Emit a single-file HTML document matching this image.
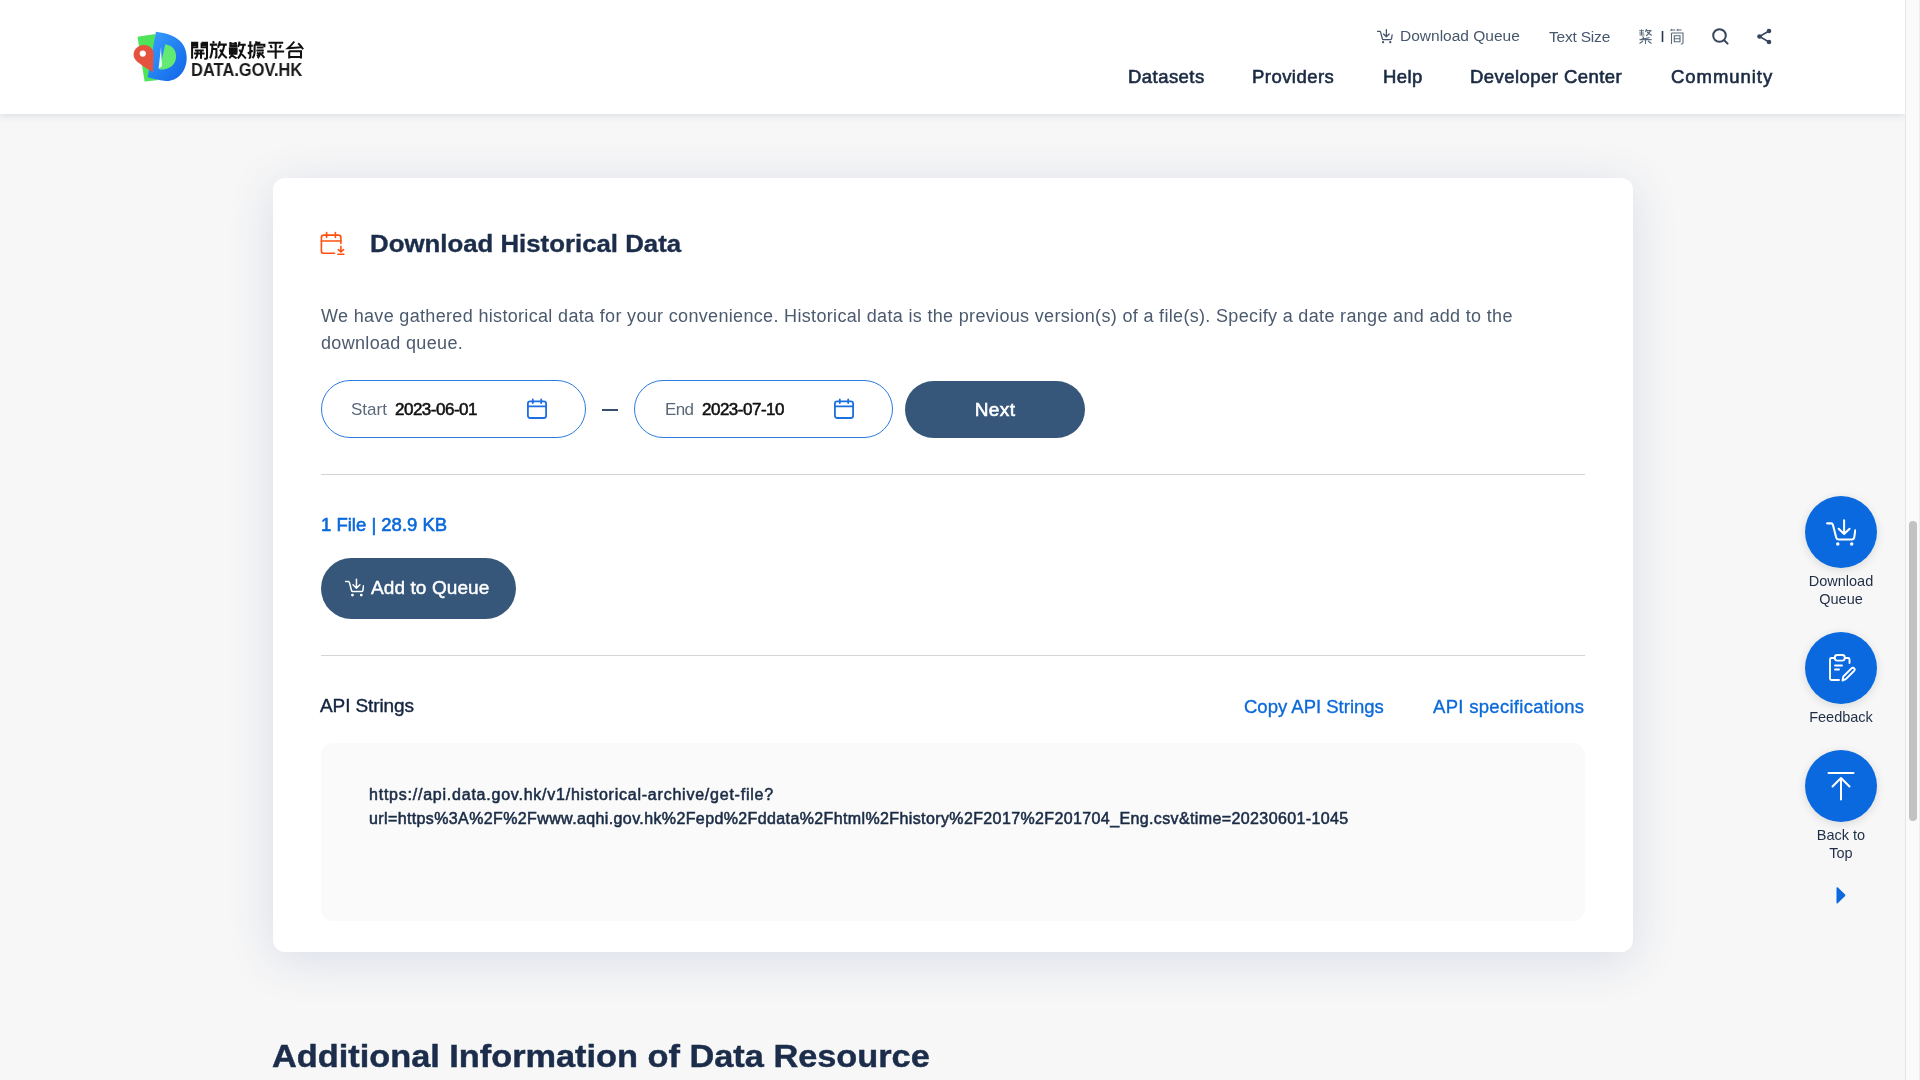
<!DOCTYPE html>
<html><head><meta charset="utf-8">
<style>
*{box-sizing:border-box}
html,body{margin:0;padding:0}
body{width:1920px;height:1080px;overflow:hidden;background:#f7f7f7;font-family:"Liberation Sans",sans-serif;position:relative}
.a{position:absolute;white-space:nowrap;will-change:transform}
#sb{position:absolute;left:1905px;top:0;width:15px;height:1080px;background:#fafafa;border-left:1px solid #e6e6e6;border-right:1px solid #ededed}
#thumb{position:absolute;left:1909px;top:521px;width:8px;height:300px;border-radius:4px;background:#c2c2c2}
#hdr{position:absolute;left:0;top:0;width:1905px;height:114px;background:#fff;box-shadow:0 1px 8px rgba(40,70,120,.16)}
.util{font-size:15.5px;color:#47576c;line-height:16px}
.nav{font-size:18.5px;font-weight:400;color:#1a2a42;line-height:19px;letter-spacing:0.45px;-webkit-text-stroke:0.6px #1a2a42}
#card{position:absolute;left:273px;top:178px;width:1360px;height:774px;background:#fff;border-radius:12px;box-shadow:0 8px 48px rgba(35,65,135,.14)}
.hr{position:absolute;left:321px;width:1264px;height:1px;background:#d4d4d4}
.pill{position:absolute;top:380px;height:58px;border:1.3px solid #2b7be0;border-radius:29px;background:#fff}
.btn{position:absolute;background:#36577a;border-radius:40px}
.fab{position:absolute;left:1805px;width:72px;height:72px;border-radius:50%;background:#0a69de;box-shadow:0 2px 10px rgba(0,0,0,.12)}
.flab{font-size:14.5px;color:#1f2e45;line-height:18px;text-align:center;width:90px;left:1796px}
</style></head>
<body>
<div id="hdr"></div>
<!-- logo -->
<svg class="a" style="left:128px;top:24px" width="64" height="64" viewBox="128 24 64 64">
 <defs>
  <linearGradient id="gB" x1="0" y1="0" x2="1" y2="1"><stop offset="0" stop-color="#3aa0ff"/><stop offset="1" stop-color="#0e63e6"/></linearGradient>
  <linearGradient id="gG" x1="0" y1="0" x2="1" y2="1"><stop offset="0" stop-color="#3fe04a"/><stop offset="1" stop-color="#6ff07a"/></linearGradient>
 </defs>
 <path d="M137.5,36.7 L155.3,34 L157,80.3 L144.6,81.5 Z" fill="#4ee45a"/>
 <path d="M155.9,31.7 C172,33.5 186.5,40 186.7,57.2 C186.8,73 176,81.5 166,80.9 C158,80.5 152,78.5 147.6,77.3 Z" fill="url(#gB)"/>
 <path d="M165.3,44.2 C172.5,45.5 176.3,50 176,57.2 C175.6,64.5 170,69.8 159.4,69.6 Z" fill="#62ea72"/>
 <path d="M161,47 L158.5,69 L162,66 Z" fill="#ffffff" opacity=".9"/>
 <path d="M144,45 C150,45 153.6,49.5 153.6,54 L152.9,72 C147,69 141.5,65 137,61.5 C134.5,59.3 133.6,57 133.6,54.5 C133.6,49 138.5,45 144,45 Z" fill="#e5533f"/>
 <circle cx="142.8" cy="53.6" r="3.1" fill="#fff"/>
</svg>
<svg class="a" style="left:190px;top:40px" width="115" height="20" viewBox="0 0 115 20" fill="none" stroke="#111" stroke-width="2.05" stroke-linecap="butt">
 <g transform="translate(1.2,1.8)">
  <path d="M0.9,0 V17 M0.9,0.9 H6 V5.4 H0.9 M1,3.1 H6 M10.4,0.9 H15.8 V15.6 Q15.8,16.9 14.2,16.9 H13 M10.4,0.9 V5.4 H15.8 M10.4,3.1 H15.8 M3.6,8.6 H12.6 M2.8,11.6 H13.4 M6.3,8.6 V12 Q6,15.2 3.8,16.8 M9.8,8.6 V17"/>
 </g>
 <g transform="translate(19.8,1.2)">
  <path d="M3.3,0 L4,2 M0,3.4 H7.4 M2.6,3.4 Q2.6,13 0.3,17 M2.6,7.7 H6.6 V14.8 Q6.6,16.4 5,16.4 M10.2,0.2 L8.2,6.5 M9.2,3.4 H17 M14.6,3.4 Q13,12.5 8.4,17.2 M10.3,8.3 Q12.5,13.8 17,17"/>
 </g>
 <g transform="translate(39,1.5)">
  <path d="M0.3,2.2 H8 M1.5,0.5 V5.5 M6.5,0.5 V5.5 M0.3,4.5 H8 M0.9,6.8 H7.6 V10.3 H0.9 Z M0.6,8.6 H8 M0,12.2 H8.4 M4.2,10.3 Q2.8,14.6 0.3,16.7 M1.8,13.5 Q5,15 7.6,17 M10.7,0.1 L9.1,5.5 M9.6,3.3 H16.8 M14.6,3.3 Q13,12.5 8.8,17 M10.4,8 Q12.5,13.5 16.9,17"/>
 </g>
 <g transform="translate(57.8,1.2)">
  <path d="M0,4.5 H5 M2.5,0 V15.6 Q2.5,17 1,16.8 M0,12.3 L5,9.4 M8.4,0 V3 M8.4,1.6 H12.6 M6.4,3.5 H16.6 V6 M6.8,3.5 V11 Q6.6,14.8 4.8,17 M9,6.3 H15.6 M8.6,9.2 H16 M9.2,11.4 L11.6,13 M9,14.6 Q12,13 12.8,11.2 M12.6,11 Q11.6,15.4 10,17 M13.4,12.6 L16.6,16.6 M15.6,11 L13.8,12.6"/>
 </g>
 <g transform="translate(77.2,1.8)">
  <path d="M1.2,0.9 H16 M3.2,3.2 L4.6,6.3 M13.7,3.2 L12.3,6.3 M0,9.7 H17 M8.5,0.9 V17"/>
 </g>
 <g transform="translate(96.3,1)">
  <path d="M8,0.5 Q5,4.5 1.7,7.2 Q9,7 14.6,6.3 M11.9,2.2 Q14.6,4.6 16.8,8.3 M2.9,10.2 V17.4 M2.9,10.3 H14.7 V17.4 M2.9,16 H14.7"/>
 </g>
</svg>
<div class="a" style="left:190.5px;top:59.5px;font-size:18.6px;line-height:19px;font-weight:700;color:#1a1a1a;transform:scaleX(0.885);transform-origin:0 0">DATA.GOV.HK</div>

<!-- util row -->
<svg class="a" style="left:1376.5px;top:29px" width="15.5" height="14.5" viewBox="0 0 28 26" fill="none" stroke="#44546a" stroke-width="2.3" stroke-linecap="round" stroke-linejoin="round">
 <path d="M1,4 H5 Q6,4 6.5,5.5 L9.6,17.5 Q10,19 11.5,19 H24.5 Q26,19 26.3,17.5 L27.3,10.5"/>
 <path d="M16.9,1 V14 M11.8,9 L16.9,14 L22,9"/>
 <circle cx="11" cy="23.8" r="0.9" fill="#44546a"/><circle cx="24" cy="23.8" r="0.9" fill="#44546a"/>
</svg>
<div class="a util" style="left:1400px;top:27.5px;">Download Queue</div>
<div class="a util" style="left:1549px;top:28.5px;letter-spacing:-0.2px">Text Size</div>
<svg class="a" style="left:1638px;top:28px" width="48" height="17" viewBox="0 0 48 17" fill="none" stroke="#5a687a" stroke-width="1.1">
 <path d="M3.5,1.5 V6.5 M1.2,2.8 H6 M1.2,5 H6 M1.5,7 H6.5 M8.5,1 L7.5,4 M8,2.6 H13.5 M12.6,2.6 Q11,6 8.2,8 M9,4 L13.8,7.5 M4.5,8.5 Q7,10 3.5,11 Q8,11 11.5,9.5 M1.5,11.6 H13.6 M7.5,11.6 V16 M5,13 L1.5,15.5 M10,13 L13.5,15.5"/>
 <path d="M24.5,3 V14" stroke="#26364d" stroke-width="1.6"/>
 <path d="M33.8,1 L32.6,3 M33.3,2 H37.2 M40,1 L38.8,3 M39.4,2 H43.5 M33.5,5 V16 M33.5,5 H45 V14.8 Q45,16 43.8,16 H42.8 M36.3,7.8 H42 V13.8 H36.3 Z M36.3,10.8 H42"/>
</svg>
<svg class="a" style="left:1711px;top:27px" width="19" height="19" viewBox="0 0 19 19" fill="none" stroke="#34455c" stroke-width="2" stroke-linecap="round">
 <circle cx="8.5" cy="8.5" r="6.3"/><path d="M13.2,13.2 L16.6,16.6"/>
</svg>
<svg class="a" style="left:1755px;top:27px" width="19" height="19" viewBox="0 0 19 19" stroke="#34455c" stroke-width="1.5">
 <path d="M14,4 L4.5,9.5 L14,15" fill="none"/>
 <circle cx="14" cy="4" r="2.3" fill="#34455c" stroke="none"/><circle cx="4.5" cy="9.5" r="2.3" fill="#34455c" stroke="none"/><circle cx="14" cy="15" r="2.3" fill="#34455c" stroke="none"/>
</svg>

<!-- nav -->
<div class="a nav" style="left:1128px;top:67px">Datasets</div>
<div class="a nav" style="left:1252px;top:67px">Providers</div>
<div class="a nav" style="left:1383px;top:67px">Help</div>
<div class="a nav" style="left:1470px;top:67px">Developer Center</div>
<div class="a nav" style="left:1671px;top:67px;letter-spacing:0.95px">Community</div>

<div id="sb"></div><div id="thumb"></div>

<!-- CARD -->
<div id="card"></div>
<svg class="a" style="left:319px;top:231px" width="27" height="25" viewBox="319 231 27 25" fill="none" stroke="#ff5010" stroke-width="1.6" stroke-linecap="round" stroke-linejoin="round">
 <path d="M334.6,253.3 H323.8 Q321.4,253.3 321.4,250.9 V237.6 Q321.4,235.1 323.8,235.1 H338.4 Q340.9,235.1 340.9,237.6 V243.4"/>
 <path d="M321.4,241 H340.9 M326.6,232.5 V237.4 M335.4,232.5 V237.4"/>
 <path d="M340.9,246.4 V251.8 M338.3,249.6 L340.9,252 L343.5,249.6 M337.9,254.2 H343.9"/>
</svg>
<div class="a" style="left:369.5px;top:231.5px;font-size:24px;line-height:24px;font-weight:700;color:#1b2d4a;transform:scaleX(1.075);transform-origin:0 0;-webkit-text-stroke:0.35px #1b2d4a">Download Historical Data</div>
<div class="a" style="left:320.5px;top:303px;font-size:18px;line-height:27px;color:#4b5a6e;letter-spacing:0.33px;white-space:normal;width:1250px">We have gathered historical data for your convenience. Historical data is the previous version(s) of a file(s). Specify a date range and add to the download queue.</div>

<div class="pill" style="left:321px;width:265px"></div>
<div class="a" style="left:351px;top:400px;font-size:17px;line-height:20px;color:#5b6879">Start</div>
<div class="a" style="left:395px;top:400px;font-size:17px;line-height:20px;color:#111;letter-spacing:-0.5px;-webkit-text-stroke:0.55px #111">2023-06-01</div>
<svg class="a" style="left:526px;top:398px" width="22" height="22" viewBox="0 0 22 22" fill="none" stroke="#1b6fe0" stroke-width="1.8" stroke-linecap="round">
 <rect x="1.9" y="3.4" width="18.2" height="16.6" rx="2.2"/><path d="M1.9,8.3 H20.1 M6.8,1.4 V5 M15.2,1.4 V5"/>
</svg>
<div class="a" style="left:602px;top:408.5px;width:16px;height:2px;background:#36506e"></div>
<div class="pill" style="left:634px;width:259px"></div>
<div class="a" style="left:665px;top:400px;font-size:17px;line-height:20px;color:#5b6879;letter-spacing:-0.6px">End</div>
<div class="a" style="left:702px;top:400px;font-size:17px;line-height:20px;color:#111;letter-spacing:-0.5px;-webkit-text-stroke:0.55px #111">2023-07-10</div>
<svg class="a" style="left:833px;top:398px" width="22" height="22" viewBox="0 0 22 22" fill="none" stroke="#1b6fe0" stroke-width="1.8" stroke-linecap="round">
 <rect x="1.9" y="3.4" width="18.2" height="16.6" rx="2.2"/><path d="M1.9,8.3 H20.1 M6.8,1.4 V5 M15.2,1.4 V5"/>
</svg>
<div class="btn" style="left:905px;top:381px;width:180px;height:57px"></div>
<div class="a" style="left:905px;top:400px;width:180px;text-align:center;font-size:19px;line-height:20px;color:#fff;letter-spacing:0.4px;-webkit-text-stroke:0.6px #fff">Next</div>

<div class="hr" style="top:474px"></div>
<div class="a" style="left:321px;top:515px;font-size:18.5px;line-height:20px;color:#0b69da;-webkit-text-stroke:0.6px #0b69da">1 File | 28.9 KB</div>
<div class="btn" style="left:321px;top:558px;width:195px;height:61px"></div>
<svg class="a" style="left:345px;top:578px" width="19" height="19" viewBox="0 0 28 26" fill="none" stroke="#fff" stroke-width="2.2" stroke-linecap="round" stroke-linejoin="round">
 <path d="M1,4 H5 Q6,4 6.5,5.5 L9.6,17.5 Q10,19 11.5,19 H24.5 Q26,19 26.3,17.5 L27.3,10.5"/>
 <path d="M16.9,1 V14 M11.8,9 L16.9,14 L22,9"/>
 <circle cx="11" cy="24.2" r="1" fill="#fff"/><circle cx="24" cy="24.2" r="1" fill="#fff"/>
</svg>
<div class="a" style="left:371px;top:578px;font-size:19px;line-height:20px;color:#fff;letter-spacing:0.1px;-webkit-text-stroke:0.45px #fff">Add to Queue</div>

<div class="hr" style="top:655px"></div>
<div class="a" style="left:320px;top:696px;font-size:19px;line-height:20px;color:#13243f;letter-spacing:-0.1px;-webkit-text-stroke:0.4px #13243f">API Strings</div>
<div class="a" style="left:1244px;top:697px;font-size:18.5px;line-height:20px;color:#0b69da;-webkit-text-stroke:0.35px #0b69da">Copy API Strings</div>
<div class="a" style="left:1433px;top:697px;font-size:18.5px;line-height:20px;color:#0b69da;letter-spacing:0.3px;-webkit-text-stroke:0.35px #0b69da">API specifications</div>
<div class="a" style="left:321px;top:743px;width:1264px;height:178px;background:#fafafa;border-radius:12px"></div>
<div class="a" style="left:368.5px;top:783px;font-size:16px;line-height:24px;color:#1a2b45;letter-spacing:0.77px;-webkit-text-stroke:0.55px #1a2b45">https://api.data.gov.hk/v1/historical-archive/get-file?</div>
<div class="a" style="left:368.5px;top:807px;font-size:16px;line-height:24px;color:#1a2b45;letter-spacing:0.38px;-webkit-text-stroke:0.55px #1a2b45">url=https%3A%2F%2Fwww.aqhi.gov.hk%2Fepd%2Fddata%2Fhtml%2Fhistory%2F2017%2F201704_Eng.csv&amp;time=20230601-1045</div>

<div class="a" style="left:272px;top:1041px;font-size:31px;line-height:31px;font-weight:700;color:#1b2d4a;transform:scaleX(1.107);transform-origin:0 0;-webkit-text-stroke:0.45px #1b2d4a">Additional Information of Data Resource</div>

<!-- FABs -->
<div class="fab" style="top:496px"></div>
<svg class="a" style="left:1826px;top:519px" width="30" height="28" viewBox="0 0 28 26" fill="none" stroke="#fff" stroke-width="1.9" stroke-linecap="round" stroke-linejoin="round">
 <path d="M1,4 H5 Q6,4 6.5,5.5 L9.6,17.5 Q10,19 11.5,19 H24.5 Q26,19 26.3,17.5 L27.3,10.5"/>
 <path d="M16.9,1 V14 M11.8,9 L16.9,14 L22,9"/>
 <circle cx="11" cy="23.2" r="0.7" fill="#fff"/><circle cx="24" cy="23.2" r="0.7" fill="#fff"/>
</svg>
<div class="a flab" style="top:572px">Download<br>Queue</div>
<div class="fab" style="top:632px"></div>
<svg class="a" style="left:1826px;top:653px" width="30" height="30" viewBox="0 0 30 30" fill="none" stroke="#fff" stroke-width="1.9" stroke-linecap="round" stroke-linejoin="round">
 <path d="M13,27 H5.5 Q4,27 4,25.5 V6.5 Q4,5 5.5,5 H8 M19.5,5 H22 Q23.5,5 23.5,6.5 V10"/>
 <rect x="8.8" y="2" width="10" height="5.6" rx="2.5"/>
 <path d="M9,12.5 H16 M9,16.5 H13"/>
 <path d="M16.5,27.5 L17.3,23.5 L25.5,15.3 Q27,14 28.2,15.3 Q29.4,16.6 28,18 L19.8,26.2 Z"/>
</svg>
<div class="a flab" style="top:708px">Feedback</div>
<div class="fab" style="top:750px"></div>
<svg class="a" style="left:1826px;top:770px" width="30" height="32" viewBox="0 0 30 32" fill="none" stroke="#fff" stroke-width="2" stroke-linecap="round" stroke-linejoin="round">
 <path d="M2.5,3 H27.5 M15,8 V29.5 M6.5,16.5 L15,8 L23.5,16.5"/>
</svg>
<div class="a flab" style="top:826px">Back to<br>Top</div>
<svg class="a" style="left:1834px;top:885px" width="14" height="21" viewBox="0 0 14 21">
 <path d="M2.5,3 Q2.5,1.5 4,2.6 L10.8,9.3 Q11.8,10.3 10.8,11.3 L4,18 Q2.5,19.2 2.5,17.6 Z" fill="#0a69de"/>
</svg>


</body></html>
